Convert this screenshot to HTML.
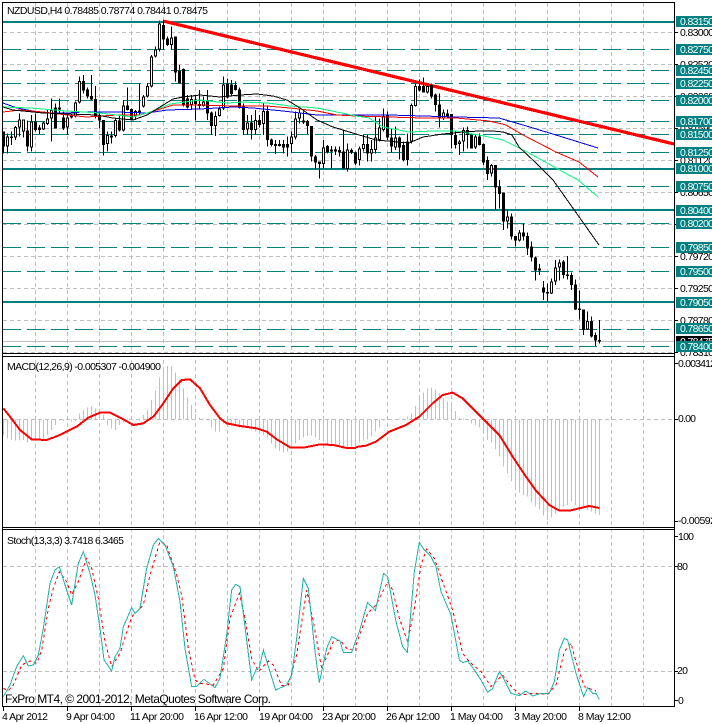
<!DOCTYPE html>
<html><head><meta charset="utf-8">
<style>
html,body{margin:0;padding:0;background:#fff;overflow:hidden}
svg{display:block;font-family:"Liberation Sans",sans-serif;font-size:10.5px}
.v{vector-effect:non-scaling-stroke}
</style></head><body>
<svg width="712" height="724" viewBox="0 0 712 724" xmlns="http://www.w3.org/2000/svg">
<rect width="712" height="724" fill="#fff"/>
<!-- grid -->
<g fill="none" stroke="#c0c0c0" stroke-dasharray="4 3" shape-rendering="crispEdges">
<path d="M35.5 3V706M67.5 3V706M99.5 3V706M131.5 3V706M163.5 3V706M195.5 3V706M227.5 3V706M259.5 3V706M291.5 3V706M323.5 3V706M355.5 3V706M387.5 3V706M419.5 3V706M451.5 3V706M483.5 3V706M515.5 3V706M547.5 3V706M579.5 3V706M611.5 3V706M643.5 3V706"/>
<path d="M3 32.5H674M3 64.5H674M3 96.5H674M3 128.5H674M3 160.5H674M3 192.5H674M3 224.5H674M3 256.5H674M3 288.5H674M3 320.5H674M3 352.5H674M3 419.5H674M3 566.5H674M3 671.5H674"/>
</g>
<!-- horizontal objects -->
<g fill="none" stroke="#008080" shape-rendering="crispEdges">
<path stroke-dasharray="18 6" d="M3 49.5H669M3 70.5H669M3 83.5H669M3 100.5H669M3 121.5H669M3 134.5H669M3 152.5H669M3 186.5H669M3 223.5H669M3 247.5H669M3 271.5H669M3 329.5H669M3 346.5H669"/>
<path stroke-width="2" d="M3 22H674M3 169H674M3 210H674M3 302H674"/>
</g>
<path d="M3 341.5H674" stroke="#c0c0c0" shape-rendering="crispEdges"/>
<!-- trend line -->
<path d="M163 21L674 144" stroke="#f00" stroke-width="3.2" fill="none" shape-rendering="crispEdges"/>
<!-- candles part 1: x=k, y in 3x units -->
<g transform="translate(3.5,0) scale(4,.33333)" fill="none" shape-rendering="crispEdges">
<path class="v" stroke="#000" stroke-width="1" d="M0 395V460M1 400V460M2 395V435M3 378V420M4 340V410M5 358V412M6 362V455M7 345V455M8 340V395M9 375V402M10 365V390M11 330V375M12 295V425M13 310V385M14 295V340M15 335V390M16 340V405M17 340V355M18 305V352M19 230V310M20 225V280M21 262V295M22 225V300M23 258V355M24 335V385M25 360V467M26 395V455M27 395V430M28 355V412M29 345V395M30 300V395M31 262V332M32 325V362M33 330V360M34 250V345M35 285V322M36 250V292M37 165V262M38 140V172M39 62V155M40 62V150M41 110V138M42 80V150M43 110V245M44 195V250M45 205V320M46 285V325M47 285V330M48 285V362M49 270V325M50 290V320M51 270V360M52 335V405M53 335V408M54 320V350M55 230V330M56 235V295M57 240V290M58 245V272M59 262V325M60 310V405M61 345V405M62 345V418M63 330V405M64 345V382M65 310V405M66 320V440M67 415V440M68 420V462M69 420V440M70 420V460M71 410V470M72 395V458M73 335V418M74 325V370M75 335V372M76 360V402M77 378V485M78 465V508M79 485V535M80 420V505M81 435V460M82 438V505M83 440V465M84 440V470M85 390V505M86 430V515M87 445V462M88 455V495M89 440V497M90 405V455M91 405V485M92 420V485M93 350V460M94 355V425M95 325V395M96 335V420M97 385V458M98 380V450M99 410V478M100 425V485M101 400V497M102 310V430M103 250V320M104 238V275M105 232V278M106 250V280M107 250V295M108 280V335M109 280V382M110 328V360M111 328V352M112 342V445M113 392V445M114 420V465M115 382V455M116 380V445M117 405V445M118 405V447M119 400V437M120 430V495M121 470V540M122 492V530M123 495V630"/>
<path class="v" stroke="#000" stroke-width="3" d="M0 395V440M1 410V440M2 409V414M3 381V412M4 358V382M5 358V395M6 392V440M7 365V442M8 365V390M9 382V390M10 368V388M11 355V372M12 330V355M13 322V385M14 322V328M15 352V385M16 352V382M17 345V352M18 307V350M19 243V307M20 243V272M21 268V290M22 288V298M23 297V350M24 345V362M25 360V435M26 405V432M27 407V412M28 360V408M29 362V392M30 317V392M31 317V330M32 327V360M33 333V350M34 332V337M35 290V320M36 258V290M37 170V260M38 148V170M39 70V148M40 75V118M41 115V135M42 112V135M43 110V218M44 212V250M45 207V315M46 295V322M47 297V315M48 298V312M49 312V318M50 305V318M51 303V340M52 337V378M53 348V378M54 325V348M55 253V325M56 250V292M57 253V282M58 255V270M59 268V322M60 320V390M61 368V388M62 368V390M63 360V390M64 360V375M65 333V372M66 333V420M67 418V435M68 432V438M69 432V438M70 432V442M71 432V442M72 410V432M73 355V412M74 338V355M75 362V368M76 363V378M77 378V470M78 470V488M79 485V492M80 442V492M81 438V456M82 449V455M83 449V455M84 450V457M85 455V505M86 448V507M87 450V458M88 458V490M89 445V480M90 432V447M91 432V460M92 447V460M93 413V450M94 382V420M95 348V390M96 345V413M97 412V440M98 413V442M99 413V442M100 435V480M101 425V480M102 315V425M103 258V318M104 258V272M105 258V278M106 258V278M107 255V290M108 283V315M109 313V355M110 337V355M111 340V350M112 342V405M113 405V435M114 424V432M115 390V425M116 390V405M117 405V445M118 410V442M119 410V435M120 432V487M121 480V522M122 495V520M123 495V561"/>
<path class="v" stroke="#fff" stroke-width="1" d="M1 413V437M3 384V409M4 361V379M5 361V392M7 368V439M10 371V385M11 358V369M12 333V352M16 355V379M18 310V347M19 246V304M26 408V429M28 363V405M30 320V389M33 336V347M35 293V317M36 261V287M37 173V257M38 151V167M39 73V145M42 115V132M47 300V312M50 308V315M53 351V375M54 328V345M55 256V322M61 371V385M63 363V387M65 336V369M72 413V429M73 358V409M74 341V352M80 445V489M86 451V504M89 448V477M90 435V444M92 450V457M93 416V447M94 385V417M95 351V387M98 416V439M102 318V422M103 261V315M106 261V275M110 340V352M114 427V429M115 393V422M118 413V439M122 498V517"/>
</g>
<!-- candles part 2 -->
<g transform="translate(3.5,180) scale(4,.33333)" fill="none" shape-rendering="crispEdges">
<path class="v" stroke="#000" stroke-width="1" d="M123 0V90M124 0V85M125 38V150M126 88V145M127 100V178M128 168V200M129 150V185M130 130V182M131 158V225M132 185V245M133 230V302M134 252V285M135 303V360M136 310V365M137 295V342M138 240V315M139 238V302M140 240V295M141 228V298M142 278V330M143 298V390M144 332V418M145 388V465M146 395V450M147 410V472M148 458V498M149 420V490"/>
<path class="v" stroke="#000" stroke-width="3" d="M123 0V22M124 20V42M125 38V125M126 110V125M127 110V170M128 168V182M129 157V182M130 157V170M131 168V205M132 200V233M133 232V272M134 265V272M135 322V338M136 336V340M137 305V340M138 262V305M139 247V262M140 245V285M141 283V288M142 285V315M143 313V388M144 386V390M145 388V450M146 423V448M147 423V470M148 465V482M149 480V485"/>
<path class="v" stroke="#fff" stroke-width="1" d="M126 113V122M129 160V179M134 268V269M137 308V337M138 265V302M139 250V259M146 426V445"/>
</g>
<!-- moving averages -->
<g fill="none" stroke-width="1" shape-rendering="crispEdges">
<path stroke="#0000e0" d="M3 103L17 108L43 113L67 113L83 112L117 112L147 113L167 110L200 109L233 107L253 108L283 111L317 115L356 115L389 115L423 116L456 117L499 118L523 125L556 135L598 148"/>
<path stroke="#f00" d="M3 112L20 110L43 112L67 115L87 117L117 115L140 115L157 110L173 105L200 105L233 106L267 106L290 108L317 111L337 115L356 116L389 117L423 118L456 118L489 121L506 125L523 135L556 152L579 162L598 177"/>
<path stroke="#00ff7f" d="M3 107L30 108L67 111L100 113L133 117L150 112L170 104L200 100L227 103L243 102L267 103L290 106L317 108L337 112L356 116L369 118L383 127L409 132L433 131L456 131L479 135L503 140L529 153L556 168L578 180L598 197"/>
<path stroke="#000" d="M3 107L13 110L43 113L97 115L113 118L133 120L147 115L160 107L173 99L183 97L200 95L220 97L240 95L257 94L273 96L287 100L300 108L317 120L333 127L356 134L376 140L409 143L423 137L443 134L463 132L479 131L493 131L503 132L512 135L519 147L536 163L553 180L599 245"/>
</g>
<!-- MACD histogram -->
<g transform="translate(3.5,350) scale(4,.33333)" fill="none" stroke="#c0c0c0" shape-rendering="crispEdges">
<path class="v" d="M0 208V255M1 208V265M2 208V270M3 208V272M4 208V272M5 208V270M6 208V278M7 208V265M8 208V270M9 208V268M10 208V265M11 208V255M12 208V240M13 208V225M14 208V212M15 208V213M16 205V208M17 208V215M18 208V215M19 190V208M20 180V208M21 172V208M22 170V208M23 175V208M24 185V208M25 195V208M26 208V225M27 208V235M28 208V240M29 208V225M30 208V218M31 205V208M34 208V212M35 195V208M36 180V208M37 150V208M38 122V208M39 82V208M40 60V208M41 48V208M42 50V208M43 68V208M44 90V208M45 115V208M46 142V208M47 165V208M48 192V208M49 203V208M50 205V208M51 208V212M52 208V233M53 208V245M54 208V245M55 208V220M56 208V225M57 208V225M58 208V228M59 208V232M60 208V232M61 208V232M62 208V238M63 208V245M64 208V250M65 208V255M66 208V262M67 208V280M68 208V295M69 208V303M70 208V308M71 208V305M72 208V295M73 208V280M74 208V270M75 208V262M76 208V258M77 208V256M78 208V262M79 208V270M80 208V275M81 208V285M82 208V290M83 208V290M84 208V290M85 208V292M86 208V292M87 208V290M88 208V285M89 208V278M90 208V272M91 208V268M92 208V258M93 208V245M94 208V232M95 208V212M96 205V208M99 205V208M100 205V208M101 200V208M102 190V208M103 168V208M104 143V208M105 127V208M106 115V208M107 112V208M108 118V208M109 130V208M110 145V208M111 155V208M112 165V208M113 183V208M114 203V208M115 205V208M117 208V220M118 208V225M119 208V232M120 208V250M121 208V270M122 208V278M123 208V298M124 208V320M125 208V350M126 208V370M127 208V395M128 208V420M129 208V428M130 208V435M131 208V440M132 208V458M133 208V470M134 208V478M135 208V497M136 208V510M137 208V503M138 208V490M139 208V480M140 208V470M141 208V465M142 208V455M143 208V465M144 208V472M145 208V475M146 208V480M147 208V485M148 208V492M149 208V495"/>
</g>
<!-- MACD signal -->
<g transform="translate(0,350) scale(.33333)" fill="none" stroke="#f00" stroke-width="6" shape-rendering="crispEdges">
<path d="M10 175L30 200L60 240L95 268L140 270L180 255L230 230L265 203L300 188L330 188L370 208L400 225L430 220L460 200L490 160L520 115L545 90L570 88L600 115L630 165L660 205L680 220L720 228L770 235L800 245L830 268L870 292L910 293L960 283L1000 285L1040 294L1068 294"/>
<path transform="translate(1068,0)" d="M0 291L30 287L60 275L100 245L150 225L190 200L230 160L260 135L290 128L320 145L370 195L430 255L470 320L510 380L540 422L580 465L610 482L640 482L700 468L730 474"/>
</g>
<!-- Stoch -->
<g transform="translate(0,525) scale(.33333)" fill="none" stroke-width="3" shape-rendering="crispEdges">
<path stroke="#f00" stroke-dasharray="9 9" d="M10 490L25 497L40 480L65 420L90 408L110 415L125 375L145 250L160 190L178 140L200 170L215 210L235 170L260 100L275 130L295 220L315 350L335 425L360 385L395 275L430 240L450 150L480 50L500 60L530 150L545 210L565 370L585 465L600 475L640 480L670 430L690 280L718 205L735 280L755 400L775 440L805 408L820 420L845 482L865 480L890 390L920 195L940 290L965 430L1000 350L1020 345L1040 370L1068 378L1068 360L1103 265L1128 240L1163 170L1178 195L1198 280L1223 350L1243 250L1263 120L1280 72L1303 100L1333 185L1358 255L1388 385L1408 410L1443 440L1473 485L1508 450L1538 490L1563 510L1598 505L1643 508L1668 480L1693 380L1713 355L1728 410L1753 485L1788 498"/>
<path stroke="#20b2aa" d="M10 515L30 480L50 425L70 392L85 423L100 420L115 390L130 310L150 175L165 135L178 125L195 180L215 240L235 115L250 80L270 145L285 210L300 310L312 405L335 438L345 395L360 370L370 305L395 248L405 265L420 250L440 130L460 60L475 40L495 60L520 125L540 230L555 370L575 485L590 484L612 463L645 488L660 460L680 330L695 195L707 178L720 185L740 345L755 465L770 430L778 428L790 375L827 495L860 480L875 450L890 340L910 160L925 190L945 380L958 473L980 370L995 335L1020 348L1030 383L1055 383L1068 345L1078 320L1103 232L1126 257L1151 145L1163 155L1188 290L1208 365L1222 382L1243 140L1258 52L1273 75L1293 95L1308 125L1323 200L1353 270L1378 405L1388 413L1403 408L1423 435L1443 465L1463 502L1478 490L1498 440L1513 465L1533 505L1558 512L1578 498L1598 513L1623 505L1648 505L1663 470L1678 375L1693 340L1703 345L1728 445L1751 515L1763 488L1778 505L1788 505L1798 523"/>
</g>
<!-- frames -->
<g shape-rendering="crispEdges">
<rect x="0" y="353" width="712" height="4" fill="#fff"/>
<rect x="0" y="527" width="712" height="3" fill="#fff"/>
<path fill="none" stroke="#000" d="M2.5 2.5H674.5V706.5H2.5ZM2 353.5H675M2 356.5H675M2 527.5H675M2 529.5H675"/>
<path fill="none" stroke="#000" d="M675 32.5H678M675 64.5H678M675 96.5H678M675 128.5H678M675 160.5H678M675 192.5H678M675 224.5H678M675 256.5H678M675 288.5H678M675 320.5H678M675 352.5H678M675 363.5H678M675 419.5H678M675 521.5H678M675 536.5H678M675 566.5H678M675 671.5H678M675 700.5H678M3.5 707V711M67.5 707V711M131.5 707V711M195.5 707V711M259.5 707V711M323.5 707V711M387.5 707V711M451.5 707V711M515.5 707V711M579.5 707V711"/>
</g>
<!-- axis labels under boxes -->
<g fill="#000">
<text x="680" y="36" textLength="34">0.83000</text>
<text x="680" y="68" textLength="34">0.82520</text>
<text x="680" y="100" textLength="34">0.82060</text>
<text x="680" y="132" textLength="34">0.81590</text>
<text x="680" y="164" textLength="34">0.81120</text>
<text x="680" y="196" textLength="34">0.80650</text>
<text x="680" y="260" textLength="34">0.79720</text>
<text x="680" y="292" textLength="34">0.79250</text>
<text x="680" y="324" textLength="34">0.78780</text>
<text x="680" y="356" textLength="34">0.78310</text>
<text x="678" y="367" textLength="38">0.003412</text>
<text x="678" y="422" textLength="18">0.00</text>
<text x="678" y="524" textLength="38">-0.00592</text>
<text x="678" y="540" textLength="16">100</text>
<text x="677" y="570" textLength="11">80</text>
<text x="677" y="674" textLength="11">20</text>
<text x="678" y="704" textLength="6">0</text>
</g>
<rect x="676" y="336" width="36" height="10" fill="#000" shape-rendering="crispEdges"/>
<text x="680" y="345" fill="#fff" textLength="34">0.78475</text>
<g fill="#008080" shape-rendering="crispEdges">
<rect x="676" y="16" width="36" height="11"/>
<rect x="676" y="44" width="36" height="11"/>
<rect x="676" y="65" width="36" height="11"/>
<rect x="676" y="78" width="36" height="11"/>
<rect x="676" y="95" width="36" height="11"/>
<rect x="676" y="116" width="36" height="11"/>
<rect x="676" y="129" width="36" height="11"/>
<rect x="676" y="147" width="36" height="11"/>
<rect x="676" y="163" width="36" height="11"/>
<rect x="676" y="181" width="36" height="11"/>
<rect x="676" y="205" width="36" height="11"/>
<rect x="676" y="218" width="36" height="11"/>
<rect x="676" y="242" width="36" height="11"/>
<rect x="676" y="266" width="36" height="11"/>
<rect x="676" y="297" width="36" height="11"/>
<rect x="676" y="323" width="36" height="11"/>
<rect x="676" y="341" width="36" height="11"/>
</g>
<g fill="#fff">
<text x="680" y="25" textLength="34">0.83150</text>
<text x="680" y="53" textLength="34">0.82750</text>
<text x="680" y="74" textLength="34">0.82450</text>
<text x="680" y="87" textLength="34">0.82250</text>
<text x="680" y="104" textLength="34">0.82000</text>
<text x="680" y="125" textLength="34">0.81700</text>
<text x="680" y="138" textLength="34">0.81500</text>
<text x="680" y="156" textLength="34">0.81250</text>
<text x="680" y="172" textLength="34">0.81000</text>
<text x="680" y="190" textLength="34">0.80750</text>
<text x="680" y="214" textLength="34">0.80400</text>
<text x="680" y="227" textLength="34">0.80200</text>
<text x="680" y="251" textLength="34">0.79850</text>
<text x="680" y="275" textLength="34">0.79500</text>
<text x="680" y="306" textLength="34">0.79050</text>
<text x="680" y="332" textLength="34">0.78650</text>
<text x="680" y="350" textLength="34">0.78400</text>
</g>
<!-- titles -->
<g fill="#000">
<text x="7" y="14" textLength="201">NZDUSD,H4  0.78485 0.78774 0.78441 0.78475</text>
<text x="7" y="370" textLength="154">MACD(12,26,9) -0.005307 -0.004900</text>
<text x="7" y="544" textLength="117">Stoch(13,3,3) 3.7418 6.3465</text>
<text x="5" y="703" textLength="266" style="font-size:12px">FxPro MT4, © 2001-2012, MetaQuotes Software Corp.</text>
<text x="2" y="720" textLength="46">4 Apr 2012</text>
<text x="66" y="720" textLength="49">9 Apr 04:00</text>
<text x="130" y="720" textLength="54">11 Apr 20:00</text>
<text x="194" y="720" textLength="54">16 Apr 12:00</text>
<text x="259" y="720" textLength="54">19 Apr 04:00</text>
<text x="322" y="720" textLength="54">23 Apr 20:00</text>
<text x="386" y="720" textLength="54">26 Apr 12:00</text>
<text x="450" y="720" textLength="53">1 May 04:00</text>
<text x="514" y="720" textLength="53">3 May 20:00</text>
<text x="578" y="720" textLength="53">8 May 12:00</text>
</g>
</svg>
</body></html>
